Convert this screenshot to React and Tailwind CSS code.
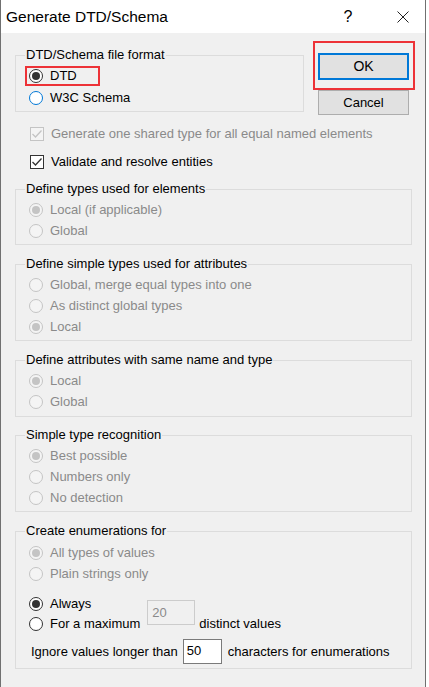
import React from 'react';

const font = { fontFamily: '"Liberation Sans", Arial, sans-serif' };

function Radio({ checked, disabled, focus }) {
  let ring = 'border-[#333333] bg-white';
  if (disabled) ring = 'border-[#c4c4c4] bg-[#f4f4f4]';
  else if (focus) ring = 'border-[#0078d7] bg-white';
  return (
    <span className={`w-[14px] h-[14px] shrink-0 rounded-full border flex items-center justify-center ${ring}`}>
      {checked && (
        <span className={`w-[8px] h-[8px] rounded-full ${disabled ? 'bg-[#c4c4c4]' : 'bg-[#333333]'}`} />
      )}
    </span>
  );
}

function Check({ disabled }) {
  return (
    <span
      className={`w-[14px] h-[14px] shrink-0 border flex items-center justify-center ${disabled ? 'border-[#c4c4c4] bg-[#f4f4f4] text-[#c4c4c4]' : 'border-[#333333] bg-white text-[#333333]'}`}
    >
      <svg width="12" height="12" viewBox="0 0 12 12" fill="none" stroke="currentColor" strokeWidth="1.3">
        <path d="M1.5 6 L4.5 9 L10.5 2.5" />
      </svg>
    </span>
  );
}

function Option({ label, checked, disabled, focus, h = 'h-[21px]' }) {
  return (
    <div className={`flex items-center gap-[7px] pl-[4px] ${h}`}>
      <Radio checked={checked} disabled={disabled} focus={focus} />
      <span className={disabled ? 'text-[#8a8a8a]' : 'text-black'}>{label}</span>
    </div>
  );
}

function Group({ title, className = '', children }) {
  return (
    <fieldset className={`border border-[#dcdcdc] pl-[9px] ${className}`}>
      <legend className="px-[1px] h-[16px] leading-[16px] text-black">{title}</legend>
      {children}
    </fieldset>
  );
}

export default function App() {
  return (
    <div className="w-[429px] h-[687px] bg-white text-[13px]" style={font}>
      <div className="w-[426px] h-[687px] bg-[#f0f0f0] border-l border-r border-[#707070] flex flex-col">
        {/* Title bar */}
        <div className="h-[33px] bg-white flex items-center shrink-0">
          <span className="ml-[5px] text-[15.5px] text-black">Generate DTD/Schema</span>
          <span className="ml-auto w-[20px] text-center text-[16px] text-black">?</span>
          <span className="ml-[38px] mr-[15px] w-[14px] flex justify-center">
            <svg width="12" height="12" viewBox="0 0 12 12" stroke="#222" strokeWidth="1">
              <path d="M0.5 0.5 L11.5 11.5 M11.5 0.5 L0.5 11.5" />
            </svg>
          </span>
        </div>

        {/* Format + buttons */}
        <div className="h-[83px] flex items-start shrink-0">
          <Group title="DTD/Schema file format" className="ml-[14px] mt-[14px] w-[289px] h-[65px]">
            <div className="mt-[3px] inline-flex items-center gap-[7px] border-2 border-[#ed3237] h-[20px] pl-[2px] w-[75px]">
              <Radio checked />
              <span className="text-black">DTD</span>
            </div>
            <Option label="W3C Schema" focus h="h-[20px] mt-[2px]" />
          </Group>

          <div className="ml-[9px] mt-[8px] flex flex-col">
            <div className="border-2 border-[#ed3237] w-[102px] pt-[10px] pb-[8px] pl-[3px]">
              <div className="w-[91px] h-[27px] border-2 border-[#0078d7] bg-[#e1e1e1] flex items-center justify-center text-[14px] text-black">
                OK
              </div>
            </div>
            <div className="ml-[5px] w-[91px] h-[25px] border border-[#adadad] bg-[#e1e1e1] flex items-center justify-center text-black">
              Cancel
            </div>
          </div>
        </div>

        {/* Checkboxes */}
        <div className="pl-[29px] shrink-0">
          <div className="mt-[8px] h-[20px] flex items-center gap-[7px]">
            <Check disabled />
            <span className="text-[#8a8a8a]">Generate one shared type for all equal named elements</span>
          </div>
          <div className="mt-[8px] h-[20px] flex items-center gap-[7px]">
            <Check />
            <span className="text-black">Validate and resolve entities</span>
          </div>
        </div>

        <div className="pl-[14px] w-[411px] shrink-0">
          <Group title="Define types used for elements" className="mt-[9px] pt-[2px] pb-[3px]">
            <Option label="Local (if applicable)" checked disabled />
            <Option label="Global" disabled />
          </Group>

          <Group title="Define simple types used for attributes" className="mt-[11px] pt-[2px] pb-[3px]">
            <Option label="Global, merge equal types into one" disabled />
            <Option label="As distinct global types" disabled />
            <Option label="Local" checked disabled />
          </Group>

          <Group title="Define attributes with same name and type" className="mt-[11px] pt-[2px] pb-[4px]">
            <Option label="Local" checked disabled />
            <Option label="Global" disabled />
          </Group>

          <Group title="Simple type recognition" className="mt-[10px] pt-[2px] pb-[3px]">
            <Option label="Best possible" checked disabled />
            <Option label="Numbers only" disabled />
            <Option label="No detection" disabled />
          </Group>

          <Group title="Create enumerations for" className="mt-[11px] pt-[3px] pb-[4px]">
            <Option label="All types of values" checked disabled />
            <Option label="Plain strings only" disabled />

            <Option label="Always" checked h="h-[20px] mt-[10px]" />
            <div className="flex items-center h-[20px] pl-[4px]">
              <Radio />
              <span className="ml-[7px] text-black">For a maximum</span>
              <div className="ml-[7px] -mt-[14px] w-[48px] h-[25px] border border-[#cccccc] bg-[#f0f0f0] pl-[4px] pt-[2px] text-[#8a8a8a] self-start">
                20
              </div>
              <span className="ml-[4px] text-black">distinct values</span>
            </div>
            <div className="mt-[5px] flex items-center">
              <span className="ml-[6px] text-black">Ignore values longer than</span>
              <div className="ml-[5px] w-[39px] h-[25px] border border-[#7a7a7a] bg-white pl-[3px] pt-[1px] text-black">
                50
              </div>
              <span className="ml-[6px] text-black">characters for enumerations</span>
            </div>
          </Group>
        </div>
      </div>
    </div>
  );
}
